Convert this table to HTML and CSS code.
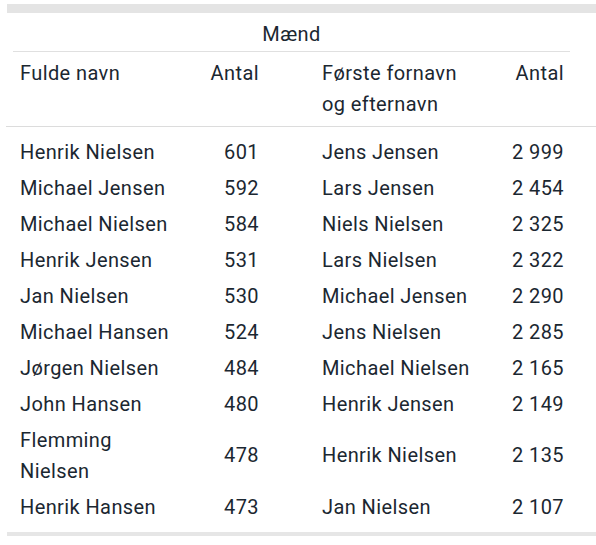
FILE: index.html
```html
<!DOCTYPE html>
<html lang="da">
<head>
<meta charset="utf-8">
<title>Mænd</title>
<link rel="stylesheet" href="styles.css">
</head>
<body>
<div class="frame">
  <div class="bar bar-top"></div>
  <table class="names">
    <colgroup>
      <col class="c1"><col class="c2"><col class="c3"><col class="c4">
    </colgroup>
    <thead>
      <tr class="cap-row">
        <th colspan="4"><div class="cap">Mænd</div></th>
      </tr>
      <tr class="head-row">
        <th class="name">Fulde navn</th>
        <th class="num">Antal</th>
        <th class="name2">Første fornavn og efternavn</th>
        <th class="num2">Antal</th>
      </tr>
    </thead>
    <tbody>
      <tr class="first"><td class="name">Henrik Nielsen</td><td class="num">601</td><td class="name2">Jens Jensen</td><td class="num2">2 999</td></tr>
      <tr><td class="name">Michael Jensen</td><td class="num">592</td><td class="name2">Lars Jensen</td><td class="num2">2 454</td></tr>
      <tr><td class="name">Michael Nielsen</td><td class="num">584</td><td class="name2">Niels Nielsen</td><td class="num2">2 325</td></tr>
      <tr><td class="name">Henrik Jensen</td><td class="num">531</td><td class="name2">Lars Nielsen</td><td class="num2">2 322</td></tr>
      <tr><td class="name">Jan Nielsen</td><td class="num">530</td><td class="name2">Michael Jensen</td><td class="num2">2 290</td></tr>
      <tr><td class="name">Michael Hansen</td><td class="num">524</td><td class="name2">Jens Nielsen</td><td class="num2">2 285</td></tr>
      <tr><td class="name">Jørgen Nielsen</td><td class="num">484</td><td class="name2">Michael Nielsen</td><td class="num2">2 165</td></tr>
      <tr><td class="name">John Hansen</td><td class="num">480</td><td class="name2">Henrik Jensen</td><td class="num2">2 149</td></tr>
      <tr><td class="name">Flemming Nielsen</td><td class="num">478</td><td class="name2">Henrik Nielsen</td><td class="num2">2 135</td></tr>
      <tr class="last"><td class="name">Henrik Hansen</td><td class="num">473</td><td class="name2">Jan Nielsen</td><td class="num2">2 107</td></tr>
    </tbody>
  </table>
  <div class="bar bar-bottom"></div>
</div>
</body>
</html>
```

FILE: styles.css
```css
html, body {
  margin: 0;
  padding: 0;
  background: #ffffff;
}

body {
  font-family: Roboto, "Liberation Sans", sans-serif;
  font-size: 20px;
  letter-spacing: 0.4px;
  color: #1b2731;
}

.frame {
  margin-left: 6px;
  padding-top: 4px;
  width: 590px;
}

.bar {
  background: #e4e4e4;
  margin-left: 1px;
}

.bar-top {
  height: 9px;
}

.bar-bottom {
  height: 4px;
  background: #e6e6e6;
  margin-top: 9.5px;
}

.names {
  width: 590px;
  border-collapse: collapse;
  table-layout: fixed;
}

.c1 { width: 174px; }
.c2 { width: 89px; }
.c3 { width: 213px; }
.c4 { width: 114px; }

.names th {
  font-weight: normal;
}

.names th,
.names td {
  padding: 0;
  line-height: 31px;
  vertical-align: middle;
}

.names .cap-row th {
  padding: 0 0 0 7px;
}

.cap {
  box-sizing: border-box;
  width: 557px;
  height: 39px;
  padding-top: 6px;
  line-height: 31px;
  text-align: center;
  border-bottom: 1px solid #e0e0e0;
}

.names .head-row th {
  vertical-align: top;
  padding-top: 6px;
  padding-bottom: 6px;
  border-bottom: 1px solid #dcdcdc;
}

.names td {
  padding-top: 2.5px;
  padding-bottom: 2.5px;
}

.names tr.first td {
  padding-top: 9.5px;
}

.names tr.last td {
  padding-bottom: 0;
}

.names .name {
  padding-left: 14px;
  padding-right: 0;
  text-align: left;
}

.names .num {
  padding-right: 10px;
  text-align: right;
}

.names .name2 {
  padding-left: 53px;
  padding-right: 0;
  text-align: left;
}

.names .num2 {
  padding-right: 32px;
  text-align: right;
}
```
